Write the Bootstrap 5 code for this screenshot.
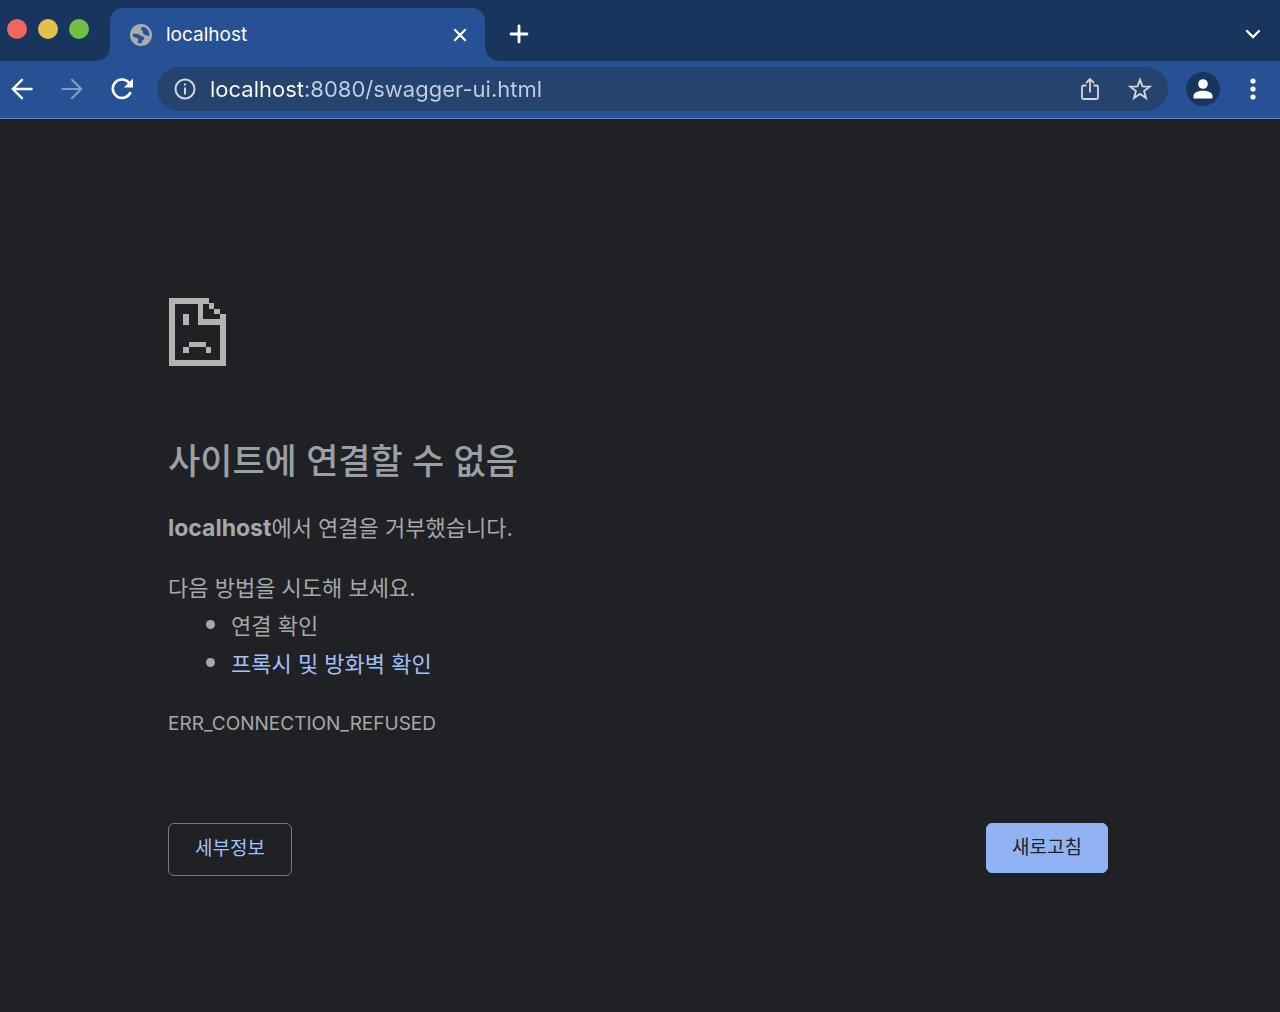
<!DOCTYPE html>
<html lang="ko" data-bs-theme="dark">
<head>
<meta charset="utf-8">
<meta name="viewport" content="width=device-width, initial-scale=1">
<title>localhost</title>
<link rel="stylesheet" href="https://cdn.jsdelivr.net/npm/bootstrap@5.3.0/dist/css/bootstrap.min.css">
<style>
body{background:#202124;color:#a5a8ab;font-family:Inter,"Noto Sans CJK KR",sans-serif;font-size:22px;line-height:38px}
svg{display:block;flex:none}
.plain-btn{background:none;border:0;padding:0;color:#fff;display:flex;align-items:center;justify-content:center;width:32px;height:32px;flex:none}
.tab-strip{background:#18355e;height:61px;padding:8px 11px 0 7px}
.lights{width:103px;gap:11px;padding-top:11px}
.light{width:20px;height:20px;border-radius:50%}
.light-close{background:#ee675c}
.light-min{background:#e1c04c}
.light-max{background:#71c045}
.page-tab{position:relative;background:#265194;border-radius:13px 13px 0 0;width:375px;padding:0 9px 0 20px;gap:14px;color:#fff;font-size:19px;line-height:24px}
.page-tab::before,.page-tab::after{content:"";position:absolute;bottom:0;width:13px;height:13px}
.page-tab::before{left:-13px;background:radial-gradient(circle at 0 0,transparent 12px,#265194 13px)}
.page-tab::after{right:-13px;background:radial-gradient(circle at 100% 0,transparent 12px,#265194 13px)}
.strip-tools{padding:0 0 1px 18px}
.toolbar{background:#265194;height:58px;padding:0 11px 2px 6px;border-bottom:1px solid #6187c5}
.nav-set{gap:18px;margin-right:19px}
.omnibox{background:#24436f;height:44px;border-radius:22px;padding:0 12px 0 17px}
.omni-tools{gap:18px}
.url-box{border:0;outline:0;padding:0;margin-left:14px;min-width:0;font-size:22px;line-height:28px;color:#c3cfe0;-webkit-text-fill-color:transparent;background:linear-gradient(90deg,#fff 94px,#c3cfe0 94px);-webkit-background-clip:text;background-clip:text}
.avatar{background:#18355e;border-radius:50%;width:34px;height:34px;margin:0 17px 0 18px}
.error-page{padding:179px 4px 40px 0}
.error-body{max-width:940px}
.error-title{font-size:35px;line-height:44px;font-weight:500;color:#9aa0a6;margin:73px 0 26px}
.host-name{font-size:23px;line-height:28px}
.tips-intro{margin:22px 0 0}
.error-code{font-size:19px;line-height:28px;margin:27px 0 85px}
.tips{padding-left:63px}
.tips li::marker{font-size:28px;line-height:28px}
.tips a{color:#a0c0fb}
.page-btn{font-size:19px;line-height:28px;padding:10px 25px;border-radius:6px}
.btn-details{--bs-btn-color:#a0c0fb;--bs-btn-border-color:#75787c;padding:11px 26px 12px}
.btn-reload{--bs-btn-color:#202124;--bs-btn-bg:#91b3f4;--bs-btn-border-color:#91b3f4}
</style>
<script src="https://cdn.jsdelivr.net/npm/bootstrap@5.3.0/dist/js/bootstrap.bundle.min.js"></script>
</head>
<body>
<header>
  <div class="tab-strip d-flex">
    <div class="lights d-flex">
      <span class="light light-close"></span><span class="light light-min"></span><span class="light light-max"></span>
    </div>
    <div class="page-tab d-flex align-items-center">
      <svg width="22" height="22" viewBox="0 0 22 22"><circle cx="11" cy="11" r="11" fill="#a9abac"/><path d="M12.500 2.700C10.300 3.800 10.400 5.600 12 6.200C13.400 6.700 12.400 8.400 13.200 9.600C14 10.800 15.600 10.800 16.600 11.500L19.300 11.900C19.900 7.300 16.800 3.300 12.500 2.700ZM2.700 10C4.500 9.500 6.500 9.700 8.200 10.300C9.900 10.900 10.400 11.800 12 12.200C13.800 12.700 14.500 13.700 14 15C13.500 16.200 12.100 16 11.900 17.200L11.900 19.300C9.500 19.500 8 18.900 6.800 18C8.100 17.700 8.800 16.700 8.400 15.200C8 13.700 5.500 14.300 4.400 13L2.900 12.500Z" fill="#265194"/></svg>
      <span class="flex-grow-1">localhost</span>
      <button class="plain-btn" type="button" aria-label="탭 닫기"><svg width="14" height="14" viewBox="0 0 14 14" stroke="#fff" stroke-width="2.200" stroke-linecap="round"><path d="M1.800 1.800L12.200 12.200M12.200 1.800L1.800 12.200"/></svg></button>
    </div>
    <div class="strip-tools d-flex align-items-center flex-grow-1 justify-content-between">
      <button class="plain-btn" type="button" aria-label="새 탭"><svg width="20" height="20" viewBox="0 0 20 20" stroke="#fff" stroke-width="2.800" stroke-linecap="round"><path d="M10 2V18M2 10H18"/></svg></button>
      <button class="plain-btn" type="button" aria-label="탭 검색"><svg width="16" height="10" viewBox="0 0 16 10" fill="none" stroke="#fff" stroke-width="2.400" stroke-linecap="round"><path d="M2 2L8 8L14 2"/></svg></button>
    </div>
  </div>
  <div class="toolbar d-flex align-items-center">
    <div class="nav-set d-flex">
      <button class="plain-btn" type="button" aria-label="뒤로"><svg width="22" height="22" viewBox="0 0 22 22" fill="none" stroke="#fff" stroke-width="2.400" stroke-linecap="round"><path d="M20.500 11H2M11 1.800L1.800 11L11 20.200"/></svg></button>
      <button class="plain-btn" type="button" aria-label="앞으로"><svg width="22" height="22" viewBox="0 0 22 22" fill="none" stroke="#7f9bc6" stroke-width="2.200" stroke-linecap="round"><path d="M1.500 11H20M11 1.800L20.200 11L11 20.200"/></svg></button>
      <button class="plain-btn" type="button" aria-label="새로고침"><svg width="22" height="22" viewBox="0 0 22 22"><path d="M18.500 5.400A9.200 9.200 0 1 0 19.600 14" fill="none" stroke="#fff" stroke-width="2.600"/><path d="M22 .5V9.500H12.800Z" fill="#fff"/></svg></button>
    </div>
    <div class="omnibox d-flex align-items-center flex-grow-1">
      <svg width="22" height="22" viewBox="0 0 22 22"><circle cx="11" cy="11" r="9.500" fill="none" stroke="#d3d6da" stroke-width="2"/><path d="M10 5.500h2v2h-2zM10 9.500h2v7h-2z" fill="#d3d6da"/></svg>
      <input class="url-box flex-grow-1" type="text" aria-label="주소창" value="localhost:8080/swagger-ui.html">
      <div class="omni-tools d-flex">
        <button class="plain-btn" type="button" aria-label="공유"><svg width="18" height="24" viewBox="0 0 18 24" fill="none" stroke="#d3d4d6" stroke-width="1.800"><path d="M5.500 8.500H2.400Q1 8.500 1 9.900V20.600Q1 22 2.400 22H15.600Q17 22 17 20.600V9.900Q17 8.500 15.600 8.500H12.500M9 15.500V2M5 6L9 2L13 6"/></svg></button>
        <button class="plain-btn" type="button" aria-label="북마크"><svg width="24" height="24" viewBox="0 0 24 24" fill="none" stroke="#d3d4d6" stroke-width="1.900"><path d="M12 2.800L14.500 9.400L21.600 9.700L16.100 14.100L18 21L12 17L6 21L7.900 14.100L2.400 9.700L9.500 9.400Z"/></svg></button>
      </div>
    </div>
    <button class="plain-btn avatar" type="button" aria-label="프로필"><svg width="20" height="20" viewBox="0 0 20 20" fill="#fff"><circle cx="10" cy="5" r="4.800"/><path d="M.5 19.500V17C.5 13.200 5.500 11.800 10 11.800S19.500 13.200 19.500 17V19.500Z"/></svg></button>
    <button class="plain-btn" type="button" aria-label="메뉴"><svg width="6" height="22" viewBox="0 0 6 22" fill="#fff"><circle cx="3" cy="3" r="2.600"/><circle cx="3" cy="11" r="2.600"/><circle cx="3" cy="19" r="2.600"/></svg></button>
  </div>
</header>
<main class="error-page">
  <div class="error-body mx-auto">
    <svg width="58" height="68" viewBox="-3 0 174 204" fill="#b3b3b3" shape-rendering="crispEdges"><path d="M0 0H120V17H17V187H153V80H87V17H103V64H153V48H170V204H0ZM120 15H136V32H120ZM136 32H153V48H136ZM42 47H59V82H42ZM59 131H111V147H59ZM42 147H59V164H42ZM111 147H127V164H111Z"/></svg>
    <h1 class="error-title">사이트에 연결할 수 없음</h1>
    <p class="mb-0"><strong class="host-name">localhost</strong>에서 연결을 거부했습니다.</p>
    <p class="tips-intro">다음 방법을 시도해 보세요.</p>
    <ul class="tips mb-0">
      <li>연결 확인</li>
      <li><a class="text-decoration-none" href="#">프록시 및 방화벽 확인</a></li>
    </ul>
    <p class="error-code">ERR_CONNECTION_REFUSED</p>
    <div class="d-flex justify-content-between align-items-start">
      <button class="btn page-btn btn-details" type="button">세부정보</button>
      <button class="btn page-btn btn-reload" type="button">새로고침</button>
    </div>
  </div>
</main>
</body>
</html>
